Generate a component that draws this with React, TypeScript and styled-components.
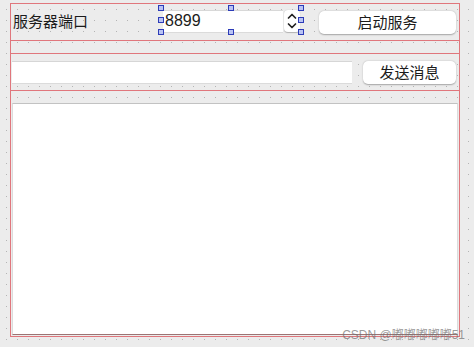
import styled, { createGlobalStyle } from "styled-components";

const GlobalStyle = createGlobalStyle`
  html, body {
    margin: 0;
    padding: 0;
    background: #ececec;
  }
  body {
    font-family: "Liberation Sans", "Noto Sans CJK SC", sans-serif;
    color: #1b1b1b;
  }
`;

const layoutRed = "#e0767c";

const Canvas = styled.div`
  position: relative;
  width: 474px;
  height: 347px;
  box-sizing: border-box;
  padding: 3px 14px 10px 10px;
  background-color: #ececec;
  background-image: radial-gradient(circle, #b4b4b4 0.6px, transparent 0.9px);
  background-size: 11px 11px;
  background-position: 1px 4px;
  overflow: hidden;
`;

const Layout = styled.div`
  height: 100%;
  box-sizing: border-box;
  border: 1px solid ${layoutRed};
  display: flex;
  flex-direction: column;
`;

const Row = styled.div<{ $height: number; $top?: boolean; $gap?: number }>`
  display: flex;
  align-items: center;
  box-sizing: border-box;
  height: ${(p) => p.$height}px;
  margin-top: ${(p) => p.$gap ?? 0}px;
  border-top: ${(p) => (p.$top ? `1px solid ${layoutRed}` : "none")};
  border-bottom: 1px solid ${layoutRed};
  flex-shrink: 0;
`;

const Label = styled.span`
  flex: 0 0 148px;
  margin-left: 2px;
  font-size: 15px;
  line-height: 20px;
`;

const SpinBox = styled.div`
  position: relative;
  display: flex;
  align-items: center;
  width: 140px;
  height: 25px;
  align-self: flex-start;
  margin-top: 4px;
`;

const SpinField = styled.div`
  width: 120px;
  height: 22px;
  margin-left: 2px;
  box-sizing: border-box;
  background: #fff;
  box-shadow: inset 0 1px 0 #d8d8d8, 0 0.5px 0 #c9c9c9;
  font-size: 16px;
  line-height: 22px;
  padding-left: 2px;
`;

const SpinArrows = styled.div`
  width: 16px;
  height: 22px;
  margin-left: 1px;
  background: #fff;
  border-radius: 4px;
  box-shadow: 0 0.5px 1px rgba(0, 0, 0, 0.25);
  display: flex;
  align-items: center;
  justify-content: center;
`;

const Handle = styled.span<{ $x: number; $y: number }>`
  position: absolute;
  left: ${(p) => p.$x - 3}px;
  top: ${(p) => p.$y - 3}px;
  width: 6px;
  height: 6px;
  box-sizing: border-box;
  border: 1px solid #2c3bb8;
  background: #b9c3f3;
`;

const Button = styled.button<{ $width: number; $gap: number }>`
  width: ${(p) => p.$width}px;
  height: 23px;
  margin-left: ${(p) => p.$gap}px;
  border: none;
  border-radius: 5px;
  background: #fff;
  box-shadow: 0 0.5px 1.5px rgba(0, 0, 0, 0.3);
  font-family: "Liberation Sans", "Noto Sans CJK SC", sans-serif;
  font-size: 15px;
  color: #1b1b1b;
  padding: 0;
  line-height: 23px;
`;

const LineEdit = styled.div`
  width: 340px;
  height: 22px;
  margin-left: 1px;
  background: #fff;
  box-shadow: inset 0 1px 0 #d6d6d6, 0 0.5px 0 #c9c9c9;
`;

const TextEdit = styled.div`
  flex: 1;
  margin: 12px 1px 1px 1px;
  background: #fff;
  border-top: 1px solid #c2c2c2;
  border-left: 1px solid #dcdcdc;
  border-right: 1px solid #dcdcdc;
  border-bottom: 1px solid #9c7373;
`;

const Watermark = styled.span`
  position: absolute;
  right: 9px;
  bottom: 5px;
  font-size: 12px;
  line-height: 14px;
  color: rgba(110, 110, 110, 0.7);
  font-family: "Liberation Sans", "Noto Sans CJK SC", sans-serif;
`;

const handles = [
  [0, 0], [70, 0], [140, 0],
  [0, 12], [140, 12],
  [0, 24], [70, 24], [140, 24],
];

export default function App() {
  return (
    <>
      <GlobalStyle />
      <Canvas>
        <Layout>
          <Row $height={37}>
            <Label>服务器端口</Label>
            <SpinBox>
              <SpinField>8899</SpinField>
              <SpinArrows>
                <svg width="12" height="20" viewBox="0 0 12 20">
                  <path d="M2.5 7 L6 3.5 L9.5 7" fill="none" stroke="#222" strokeWidth="1.7" strokeLinecap="round" strokeLinejoin="round" />
                  <path d="M2.5 13 L6 16.5 L9.5 13" fill="none" stroke="#222" strokeWidth="1.7" strokeLinecap="round" strokeLinejoin="round" />
                </svg>
              </SpinArrows>
              {handles.map(([x, y], i) => (
                <Handle key={i} $x={x} $y={y} />
              ))}
            </SpinBox>
            <Button $width={137} $gap={18}>启动服务</Button>
          </Row>
          <Row $height={38} $top $gap={12}>
            <LineEdit />
            <Button $width={93} $gap={11}>发送消息</Button>
          </Row>
          <TextEdit />
        </Layout>
        <Watermark>CSDN @嘟嘟嘟嘟嘟51</Watermark>
      </Canvas>
    </>
  );
}
